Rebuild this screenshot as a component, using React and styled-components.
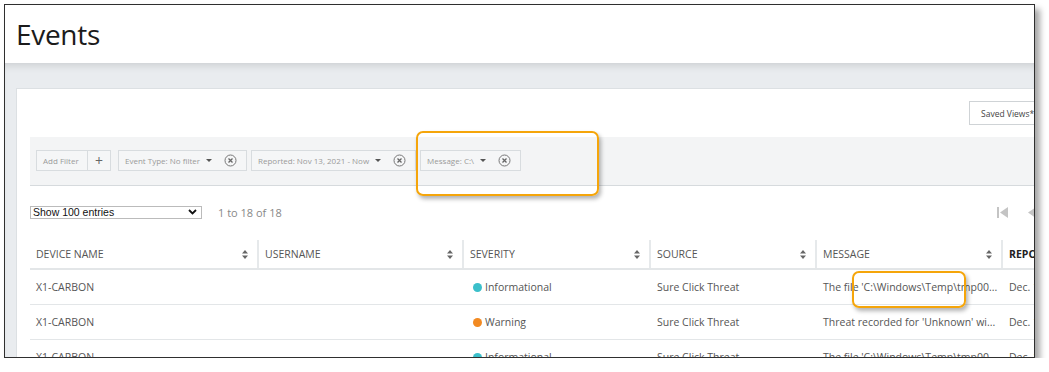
import styled, { createGlobalStyle } from "styled-components";

const GlobalStyle = createGlobalStyle`
  body {
    margin: 0;
    background: #ffffff;
    font-family: "Open Sans", "Noto Sans", sans-serif;
  }
`;

const Shot = styled.div`
  position: relative;
  margin: 4px 0 0 4px;
  width: 1029px;
  height: 352px;
  border: 1px solid #2f2f2f;
  background: #ffffff;
  overflow: hidden;
  box-shadow: 5px 5px 6px rgba(0, 0, 0, 0.35);
`;

const Header = styled.header`
  height: 58px;
  padding-left: 11px;
  display: flex;
  align-items: center;
`;

const Title = styled.h1`
  margin: 0;
  font-size: 28px;
  font-weight: 400;
  color: #1b1b1b;
  letter-spacing: -0.3px;
`;

const Main = styled.main`
  height: 100%;
  background: #e9ecef;
  padding: 25px 0 0 11px;
  box-shadow: inset 0 7px 8px -5px rgba(0, 0, 0, 0.14);
`;

const Card = styled.section`
  width: 1058px;
  height: 400px;
  background: #ffffff;
  border: 1px solid #dce0e3;
  padding: 12px 14px 0 13px;
  box-sizing: border-box;
`;

const TopBar = styled.div`
  display: flex;
  justify-content: flex-end;
  height: 24px;
  margin-bottom: 12px;
`;

const SavedViews = styled.button`
  width: 90px;
  height: 24px;
  background: #ffffff;
  border: 1px solid #cfd3d6;
  font-family: "Open Sans", sans-serif;
  font-size: 8.5px;
  color: #444;
  text-align: left;
  padding-left: 11px;
`;

const FilterBar = styled.div`
  height: 49px;
  background: #f3f4f5;
  border-bottom: 1px solid #d6dadd;
  display: flex;
  align-items: flex-start;
  padding: 13px 0 0 6px;
  box-sizing: border-box;
`;

const FilterGroup = styled.div`
  display: flex;
  margin-right: ${(p) => p.$gap || 4}px;
`;

const FilterBox = styled.div`
  height: 21px;
  width: ${(p) => (p.$w ? `${p.$w}px` : "auto")};
  box-sizing: border-box;
  border: 1px solid #d8dcdf;
  background: #f5f6f7;
  display: flex;
  align-items: center;
  justify-content: ${(p) => (p.$center ? "center" : "flex-start")};
  padding: 0 ${(p) => (p.$center ? 0 : 9)}px 0 ${(p) => (p.$center ? 0 : 6)}px;
  font-size: ${(p) => (p.$big ? 14 : 8)}px;
  color: ${(p) => (p.$big ? "#666" : "#9a9a9a")};
  white-space: nowrap;
  flex-shrink: 0;
  & + & {
    border-left: none;
  }
`;

const Caret = styled.span`
  width: 0;
  height: 0;
  border-left: 3px solid transparent;
  border-right: 3px solid transparent;
  border-top: 3.5px solid #555;
  margin-left: 6px;
`;

const Clear = styled.span`
  margin-left: 12px;
  display: flex;
`;

const ListRow = styled.div`
  display: flex;
  align-items: center;
  height: 14px;
  margin-top: 19px;
`;

const EntriesSelect = styled.div`
  width: 172px;
  height: 13px;
  box-sizing: border-box;
  border: 1px solid #bbbbbb;
  display: flex;
  align-items: center;
  justify-content: space-between;
  padding: 0 4px 0 2px;
  font-family: "Liberation Sans", Arial, sans-serif;
  font-size: 10.5px;
  color: #111;
`;

const Count = styled.span`
  margin-left: 16px;
  font-size: 11px;
  color: #888;
`;

const Pager = styled.div`
  margin-left: auto;
  margin-right: 23px;
  display: flex;
  gap: 18px;
  align-items: center;
`;

const Table = styled.div`
  margin-top: 21px;
`;

const Row = styled.div`
  display: grid;
  grid-template-columns: 229px 205px 187px 166px 186px 120px;
  height: ${(p) => (p.$head ? 30 : 35)}px;
  border-bottom: 1px solid #e3e6e8;
  border-bottom-width: ${(p) => (p.$head ? 2 : 1)}px;
  box-sizing: border-box;
`;

const HeadCell = styled.div`
  display: flex;
  align-items: center;
  padding: 0 9px 0 6px;
  border-right: 2px solid #e6e9eb;
  font-size: 10.5px;
  color: ${(p) => (p.$active ? "#222" : "#555")};
  font-weight: ${(p) => (p.$active ? 700 : 400)};
  white-space: nowrap;
  &:last-child {
    border-right: none;
  }
`;

const SortIcon = styled.span`
  margin-left: auto;
  display: flex;
`;

const Cell = styled.div`
  display: flex;
  align-items: center;
  padding-left: 6px;
  font-size: 10.5px;
  color: #555;
  white-space: nowrap;
  overflow: hidden;
`;

const Dot = styled.span`
  width: 9px;
  height: 9px;
  border-radius: 50%;
  background: ${(p) => p.$color};
  margin-right: 3px;
  margin-left: 3px;
`;

const Callout = styled.div`
  position: absolute;
  left: ${(p) => p.$x}px;
  top: ${(p) => p.$y}px;
  width: ${(p) => p.$w}px;
  height: ${(p) => p.$h}px;
  border: 2.5px solid #f5a50a;
  border-radius: 7px;
  box-sizing: border-box;
  box-shadow: 2px 3px 4px rgba(0, 0, 0, 0.3);
`;

const XCircle = () => (
  <svg width="13" height="13" viewBox="0 0 13 13">
    <circle cx="6.5" cy="6.5" r="5.5" fill="none" stroke="#777" strokeWidth="1" />
    <path d="M4.5 4.5 L8.5 8.5 M8.5 4.5 L4.5 8.5" stroke="#666" strokeWidth="1.3" />
  </svg>
);

const Sort = () => (
  <svg width="6" height="9" viewBox="0 0 6 9">
    <path d="M3 0 L6 3.5 H0 Z M3 9 L6 5.5 H0 Z" fill="#666" />
  </svg>
);

const headers = ["DEVICE NAME", "USERNAME", "SEVERITY", "SOURCE", "MESSAGE"];

const rows = [
  {
    device: "X1-CARBON",
    severity: "Informational",
    color: "#3bbfca",
    source: "Sure Click Threat",
    message: "The file 'C:\\Windows\\Temp\\tmp00...",
  },
  {
    device: "X1-CARBON",
    severity: "Warning",
    color: "#f28a22",
    source: "Sure Click Threat",
    message: "Threat recorded for 'Unknown' wi...",
  },
  {
    device: "X1-CARBON",
    severity: "Informational",
    color: "#3bbfca",
    source: "Sure Click Threat",
    message: "The file 'C:\\Windows\\Temp\\tmp00...",
  },
];

const filters = [
  "Event Type: No filter",
  "Reported: Nov 13, 2021 - Now",
  "Message: C:\\",
];

const App = () => {
  return (
    <>
      <GlobalStyle />
      <Shot>
        <Header>
          <Title>Events</Title>
        </Header>
        <Main>
          <Card>
            <TopBar>
              <SavedViews>Saved Views*</SavedViews>
            </TopBar>
            <FilterBar>
              <FilterGroup $gap={7}>
                <FilterBox $w={52}>Add Filter</FilterBox>
                <FilterBox $w={23} $center $big>
                  +
                </FilterBox>
              </FilterGroup>
              {filters.map((f) => (
                <FilterGroup key={f} $gap={4}>
                  <FilterBox>
                    {f}
                    <Caret />
                    <Clear>
                      <XCircle />
                    </Clear>
                  </FilterBox>
                </FilterGroup>
              ))}
            </FilterBar>
            <ListRow>
              <EntriesSelect>
                Show 100 entries
                <svg width="9" height="6" viewBox="0 0 9 6">
                  <path d="M1 1 L4.5 4.5 L8 1" fill="none" stroke="#111" strokeWidth="1.8" />
                </svg>
              </EntriesSelect>
              <Count>1 to 18 of 18</Count>
              <Pager>
                <svg width="12" height="11" viewBox="0 0 12 11">
                  <rect x="0" y="0" width="2" height="11" fill="#c4c4c4" />
                  <path d="M11 0 V11 L3 5.5 Z" fill="#c4c4c4" />
                </svg>
                <svg width="9" height="11" viewBox="0 0 9 11">
                  <path d="M9 0 V11 L1 5.5 Z" fill="#c4c4c4" />
                </svg>
              </Pager>
            </ListRow>
            <Table>
              <Row $head>
                {headers.map((h) => (
                  <HeadCell key={h}>
                    {h}
                    <SortIcon>
                      <Sort />
                    </SortIcon>
                  </HeadCell>
                ))}
                <HeadCell $active>REPORTED</HeadCell>
              </Row>
              {rows.map((r, i) => (
                <Row key={i}>
                  <Cell>{r.device}</Cell>
                  <Cell />
                  <Cell>
                    <Dot $color={r.color} />
                    {r.severity}
                  </Cell>
                  <Cell>{r.source}</Cell>
                  <Cell>{r.message}</Cell>
                  <Cell>Dec. 14, 2021</Cell>
                </Row>
              ))}
            </Table>
          </Card>
        </Main>
        <Callout $x={411} $y={126} $w={183} $h={65} />
        <Callout $x={847} $y={266} $w={114} $h={37} />
      </Shot>
    </>
  );
};

export default App;
